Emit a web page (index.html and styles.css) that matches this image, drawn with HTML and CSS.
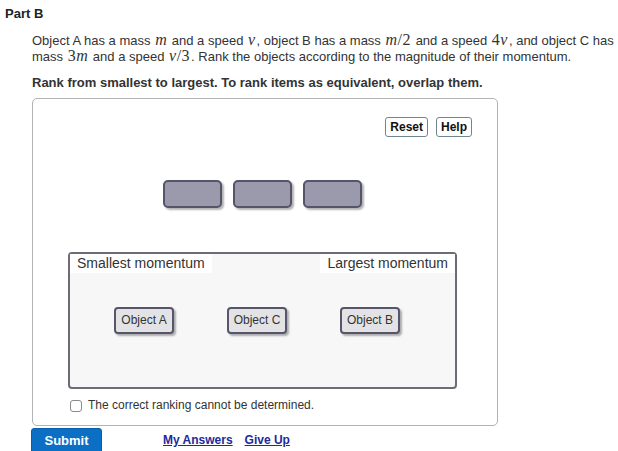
FILE: index.html
```html
<!DOCTYPE html>
<html>
<head>
<meta charset="utf-8">
<link rel="stylesheet" href="styles.css">
</head>
<body>
<div class="page">
  <h2 class="part-title">Part B</h2>
  <div class="content">
    <p class="question">Object A has a mass <span class="math"><i>m</i></span> and a speed <span class="math"><i>v</i></span>, object B has a mass <span class="math"><i>m</i>/2</span> and a speed <span class="math">4<i>v</i></span>, and object C has mass <span class="math">3<i>m</i></span> and a speed <span class="math"><i>v</i>/3</span>. Rank the objects according to the magnitude of their momentum.</p>
    <p class="instructions">Rank from smallest to largest. To rank items as equivalent, overlap them.</p>
    <div class="widget">
      <div class="toolbar">
        <button class="tool-btn">Reset</button>
        <button class="tool-btn">Help</button>
      </div>
      <div class="work">
        <div class="slots">
          <div class="slot"></div>
          <div class="slot"></div>
          <div class="slot"></div>
        </div>
        <div class="ranking">
          <div class="labels">
            <span class="label">Smallest momentum</span>
            <span class="label">Largest momentum</span>
          </div>
          <div class="items">
            <div class="item">Object A</div>
            <div class="item">Object C</div>
            <div class="item">Object B</div>
          </div>
        </div>
        <label class="cannot">
          <span class="checkbox"></span>
          <span>The correct ranking cannot be determined.</span>
        </label>
      </div>
    </div>
    <div class="actions">
      <button class="submit">Submit</button>
      <a class="link" href="#">My Answers</a>
      <a class="link" href="#">Give Up</a>
    </div>
  </div>
</div>
</body>
</html>
```

FILE: styles.css
```css
html, body {
  margin: 0;
  padding: 0;
  background: #ffffff;
  overflow: hidden;
}
body {
  font-family: "Liberation Sans", Arial, sans-serif;
  color: #333333;
  font-size: 13px;
  line-height: 16px;
}
.page {
  width: 618px;
  height: 451px;
  overflow: hidden;
}
.part-title {
  margin: 0;
  padding: 6px 0 0 5px;
  font-size: 13px;
  line-height: 16px;
  font-weight: bold;
  color: #222222;
}
.content {
  padding-left: 32px;
}
.question {
  margin: 11px 0 0 0;
  width: 586px;
  font-size: 13px;
  line-height: 16px;
}
.math {
  display: inline-block;
  font-family: "Liberation Serif", "Times New Roman", serif;
  font-size: 16px;
  line-height: 14px;
  margin: 0 1px;
  letter-spacing: 0.5px;
}
.math i {
  font-style: italic;
}
.instructions {
  margin: 10px 0 0 0;
  font-weight: bold;
  font-size: 13px;
  line-height: 16px;
}
.widget {
  margin-top: 7px;
  width: 464px;
  height: 326px;
  border: 1px solid #b3b3b3;
  border-radius: 5px;
  box-sizing: content-box;
}
.toolbar {
  display: flex;
  justify-content: flex-end;
  gap: 8px;
  padding: 18px 25px 0 0;
}
.tool-btn {
  font-family: "Liberation Sans", Arial, sans-serif;
  font-size: 12px;
  font-weight: bold;
  color: #111111;
  background: #ffffff;
  border: 1px solid #6f8790;
  border-radius: 3px;
  height: 20px;
  padding: 0 4px;
  line-height: 18px;
}
.work {
  padding-left: 35px;
  width: 389px;
}
.slots {
  display: flex;
  justify-content: center;
  gap: 11px;
  margin-top: 43px;
  padding-right: 1px;
}
.slot {
  width: 59px;
  height: 28px;
  box-sizing: border-box;
  background: #9b99ac;
  border: 2px solid #55546a;
  border-radius: 5px;
  box-shadow: 2px 2px 2px rgba(0, 0, 0, 0.3);
}
.ranking {
  margin-top: 44px;
  height: 137px;
  box-sizing: border-box;
  background: #f7f7f7;
  border: 2px solid #6d6c74;
  border-radius: 4px;
}
.labels {
  display: flex;
  justify-content: space-between;
}
.label {
  background: #ffffff;
  padding: 0 7px;
  height: 19px;
  line-height: 18px;
  font-size: 14px;
  color: #333333;
}
.items {
  display: flex;
  gap: 53px;
  padding-left: 44px;
  margin-top: 34px;
}
.item {
  width: 60px;
  height: 27px;
  box-sizing: border-box;
  background: #e3e3e5;
  border: 2px solid #56556b;
  border-radius: 4px;
  box-shadow: 2px 2px 2px rgba(0, 0, 0, 0.3);
  font-size: 12px;
  line-height: 22px;
  text-align: center;
  color: #333333;
}
.cannot {
  display: flex;
  align-items: center;
  gap: 6px;
  margin-top: 10px;
  padding-left: 2px;
  font-size: 12px;
  line-height: 13px;
  color: #333333;
}
.checkbox {
  width: 12px;
  height: 12px;
  box-sizing: border-box;
  border: 1px solid #8a8a8a;
  border-radius: 3px;
  background: #ffffff;
}
.actions {
  display: flex;
  align-items: flex-start;
  margin-top: 2px;
  margin-left: -1px;
}
.submit {
  width: 71px;
  height: 26px;
  background: #0b6fc6;
  color: #ffffff;
  border: 1px solid #0a5fa8;
  border-radius: 3px;
  font-family: "Liberation Sans", Arial, sans-serif;
  font-size: 13px;
  font-weight: bold;
  padding: 0;
  line-height: 22px;
  margin-right: 61px;
}
.link {
  font-size: 12px;
  font-weight: bold;
  color: #22299c;
  text-decoration: underline;
  margin-top: 5px;
  margin-right: 12px;
  line-height: 14px;
}
```
